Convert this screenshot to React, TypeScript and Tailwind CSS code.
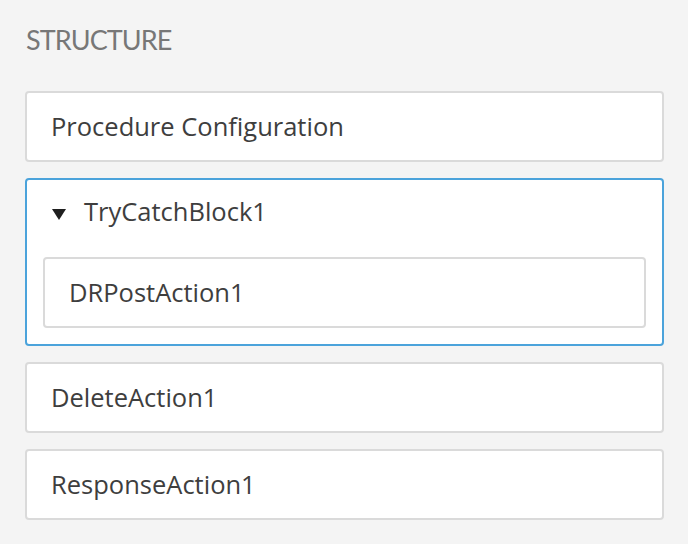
const items = ["DeleteAction1", "ResponseAction1"];

function Card({ label }: { label: string }) {
  return (
    <div className="flex h-[71px] items-center rounded-[4px] border-2 border-[#dadada] bg-white px-[24px] text-[25.5px] text-[#3e3e3e]">
      {label}
    </div>
  );
}

export default function App() {
  return (
    <div
      className="min-h-[544px] w-[688px] bg-[#f4f4f4] pl-[25px] pr-[24px] pt-[26px]"
      style={{ fontFamily: "'Open Sans', Lato, sans-serif" }}
    >
      <h2
        className="mb-[37px] pl-px text-[27px] leading-[28px] tracking-[-0.9px] text-[#777777]"
        style={{ fontFamily: "Lato, sans-serif" }}
      >
        STRUCTURE
      </h2>
      <div className="flex flex-col gap-[16px]">
        <Card label="Procedure Configuration" />

        <div className="rounded-[4px] border-2 border-[#4ba3db] bg-white px-[16px] pb-[16px]">
          <div className="flex h-[77px] items-center gap-[18px] pb-[14px] pl-[9px] text-[25.5px] text-[#3e3e3e]">
            <svg width="14" height="11" viewBox="0 0 14 11" className="mt-[5px]">
              <path d="M0 0 H14 L7 11 Z" fill="#1f1f1f" />
            </svg>
            <span>TryCatchBlock1</span>
          </div>
          <Card label="DRPostAction1" />
        </div>

        {items.map((label) => (
          <Card key={label} label={label} />
        ))}
      </div>
    </div>
  );
}
